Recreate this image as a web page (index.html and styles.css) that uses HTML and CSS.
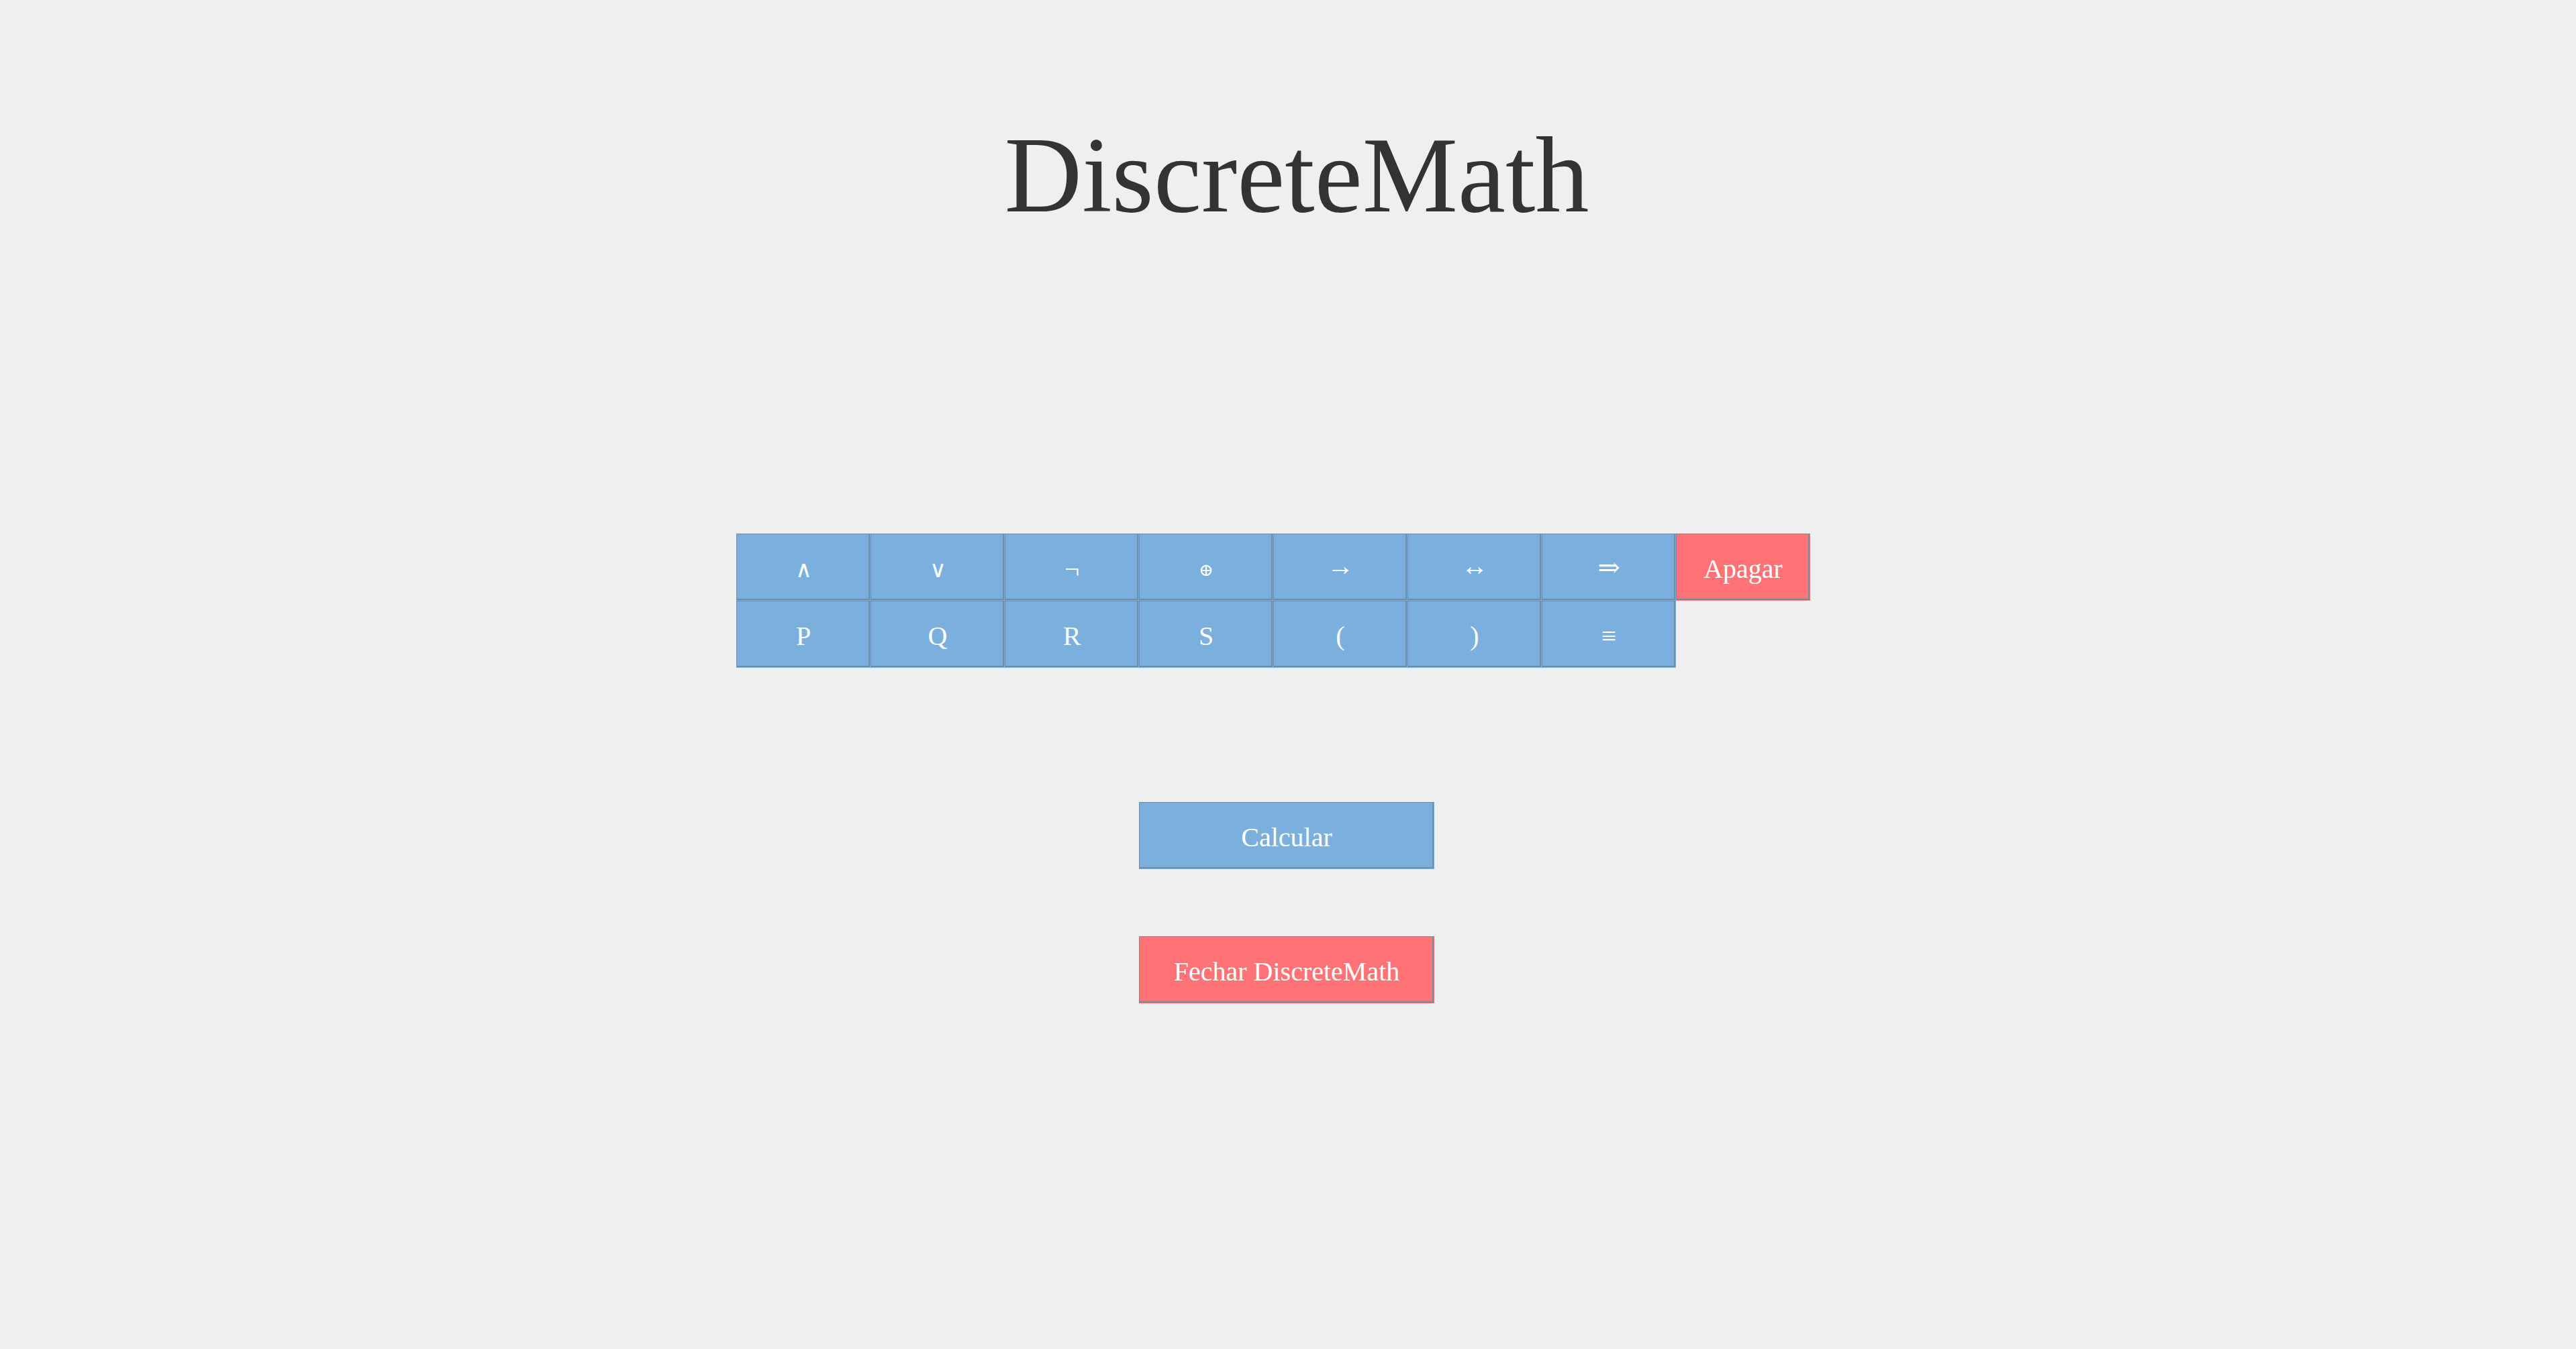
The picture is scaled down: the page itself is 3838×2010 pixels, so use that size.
FILE: index.html
```html
<!DOCTYPE html>
<html lang="pt">
<head>
<meta charset="utf-8">
<title>DiscreteMath</title>
<link rel="stylesheet" href="styles.css">
</head>
<body>
<main class="page">
  <h1 class="title">DiscreteMath</h1>
  <div class="keypad">
    <button class="key"><span class="sym-thin">∧</span></button>
    <button class="key"><span class="sym-thin">∨</span></button>
    <button class="key">¬</button>
    <button class="key"><span class="sym-small">⊕</span></button>
    <button class="key"><span class="sym-raise">→</span></button>
    <button class="key"><span class="sym-raise">↔</span></button>
    <button class="key"><span class="sym-mid">⇒</span></button>
    <button class="key key-red">Apagar</button>
    <button class="key">P</button>
    <button class="key">Q</button>
    <button class="key">R</button>
    <button class="key">S</button>
    <button class="key">(</button>
    <button class="key">)</button>
    <button class="key">≡</button>
  </div>
  <button class="key wide calc">Calcular</button>
  <button class="key wide key-red close">Fechar DiscreteMath</button>
</main>
</body>
</html>
```

FILE: styles.css
```css
html, body {
  margin: 0;
  padding: 0;
  background: #efefef;
}

body {
  font-family: "Liberation Serif", "Times New Roman", "DejaVu Serif", serif;
  width: 3838px;
  height: 2010px;
  overflow: hidden;
}

.page {
  display: flex;
  flex-direction: column;
  align-items: center;
  padding-top: 181px;
}

.title {
  margin: 0 0 0 26px;
  font-size: 160px;
  line-height: 160px;
  font-weight: normal;
  color: #333333;
}

.keypad {
  margin-top: 454px;
  margin-right: 44px;
  display: grid;
  grid-template-columns: repeat(8, 200px);
  grid-auto-rows: 100px;
}

.key {
  box-sizing: border-box;
  width: 200px;
  height: 100px;
  margin: 0;
  padding: 5px 0 0 0;
  font-family: "Liberation Serif", "Times New Roman", "DejaVu Serif", serif;
  font-size: 40px;
  line-height: 40px;
  color: #ffffff;
  background: #7bb0de;
  border-style: solid;
  border-width: 1px;
  border-color: #708ca5 #7bb0de #7bb0de #708ca5;
  box-shadow: inset -2px -2px 0 #708ca5;
  text-align: center;
  vertical-align: top;
  cursor: pointer;
}

.sym-thin {
  font-family: "DejaVu Sans", sans-serif;
  font-weight: 200;
  font-size: 34px;
}

.sym-small {
  font-size: 26px;
}

.sym-raise {
  display: inline-block;
  transform: translateY(-4px);
}

.sym-mid {
  font-size: 40px;
  display: inline-block;
  transform: translateY(-2px);
}

.key-red {
  background: #ff7376;
  border-color: #708ca5 #ff7376 #ff7376 #708ca5;
}

.wide {
  width: 440px;
  margin-right: 4px;
}

.calc {
  margin-top: 200px;
}

.close {
  margin-top: 100px;
}
```
